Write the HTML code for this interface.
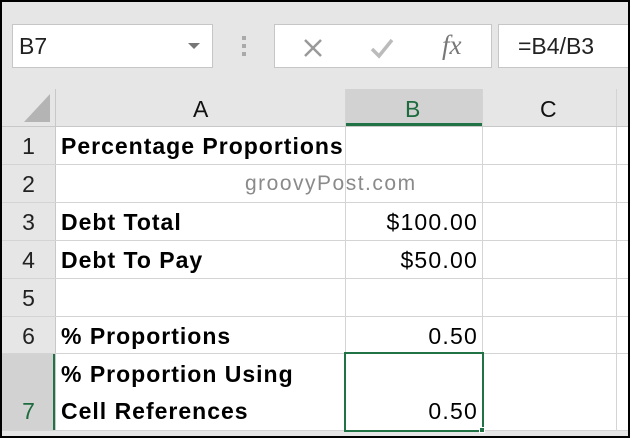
<!DOCTYPE html>
<html><head><style>
*{margin:0;padding:0;box-sizing:border-box}
body{width:630px;height:438px;overflow:hidden;background:#000;font-family:"Liberation Sans",sans-serif}
#w{position:absolute;left:2px;top:2px;width:626px;height:434px;background:#e6e6e6;overflow:hidden}
.abs{position:absolute}
.box{position:absolute;background:#fff;border:1px solid #c6c6c6}
.hl{position:absolute;background:#d4d4d4;height:1px}
.vl{position:absolute;background:#d4d4d4;width:1px}
.t{position:absolute;font-size:23px;font-weight:bold;color:#000;white-space:nowrap;letter-spacing:1px}
.n{position:absolute;font-size:23px;color:#000;white-space:nowrap;letter-spacing:1.2px}
.rh{position:absolute;left:0;width:53px;text-align:center;font-size:23px;color:#222}
</style></head><body>
<div id="w">
<div class="box" style="left:10px;top:22px;width:201px;height:44px"></div>
<div class="abs" style="left:17px;top:31px;font-size:23px;color:#222">B7</div>
<div class="abs" style="left:186px;top:41px;width:0;height:0;border-left:6px solid transparent;border-right:6px solid transparent;border-top:6px solid #777"></div>
<div class="abs" style="left:240px;top:34px;width:4px;height:4px;background:#aaa;box-shadow:0 8px 0 #aaa,0 16px 0 #aaa"></div>
<div class="box" style="left:272px;top:22px;width:218px;height:44px"></div>
<svg class="abs" style="left:300px;top:35px" width="22" height="22"><path d="M3 3L19 19M19 3L3 19" stroke="#999" stroke-width="2.5"/></svg>
<svg class="abs" style="left:367px;top:35px" width="26" height="22"><path d="M3 12L10 19L23 3" stroke="#bbb" stroke-width="3.5" fill="none"/></svg>
<div class="abs" style="left:440px;top:28px;font-family:'Liberation Serif',serif;font-style:italic;font-size:27px;color:#777">fx</div>
<div class="box" style="left:496px;top:22px;width:150px;height:44px"></div>
<div class="abs" style="left:516px;top:31px;font-size:23px;color:#222">=B4/B3</div>
<!-- grid -->
<div class="abs" style="left:0;top:87px;width:626px;height:341px;background:#fff"></div>
<div class="abs" style="left:0;top:87px;width:626px;height:37px;background:#e6e6e6"></div>
<div class="abs" style="left:0;top:124px;width:53px;height:304px;background:#e6e6e6"></div>
<div class="abs" style="left:343px;top:87px;width:137px;height:37px;background:#d2d2d2;border-bottom:3px solid #217346"></div>
<div class="abs" style="left:0;top:351px;width:53px;height:77px;background:#d2d2d2"></div>
<div class="abs" style="left:22px;top:92px;width:0;height:0;border-bottom:28px solid #b4b4b4;border-left:26px solid transparent"></div>
<div class="vl" style="left:53px;top:87px;height:341px;background:#c8c8c8"></div>
<div class="vl" style="left:343px;top:87px;height:341px"></div>
<div class="vl" style="left:480px;top:87px;height:341px"></div>
<div class="vl" style="left:614px;top:87px;height:341px"></div>
<div class="hl" style="left:0;top:124px;width:626px;background:#c8c8c8"></div>
<div class="hl" style="left:0;top:162px;width:626px"></div>
<div class="hl" style="left:0;top:200px;width:626px"></div>
<div class="hl" style="left:0;top:238px;width:626px"></div>
<div class="hl" style="left:0;top:276px;width:626px"></div>
<div class="hl" style="left:0;top:314px;width:626px"></div>
<div class="hl" style="left:0;top:351px;width:626px"></div>
<div class="hl" style="left:0;top:428px;width:626px"></div>
<div class="abs" style="left:51px;top:352px;width:2px;height:76px;background:#217346"></div>
<div class="abs" style="left:191px;top:94px;font-size:23px;color:#111">A</div>
<div class="abs" style="left:403px;top:94px;font-size:23px;color:#1d6b3f">B</div>
<div class="abs" style="left:538px;top:94px;font-size:23px;color:#111">C</div>
<div class="rh" style="top:131px">1</div>
<div class="rh" style="top:169px">2</div>
<div class="rh" style="top:207px">3</div>
<div class="rh" style="top:245px">4</div>
<div class="rh" style="top:283px">5</div>
<div class="rh" style="top:321px">6</div>
<div class="rh" style="top:396px;color:#1d6b3f">7</div>
<div class="t" style="left:59px;top:131px">Percentage Proportions</div>
<div class="abs" style="left:243px;top:170px;font-size:21px;letter-spacing:1.5px;color:#8a8a8a">groovyPost.com</div>
<div class="t" style="left:59px;top:207px">Debt Total</div>
<div class="n" style="right:150px;top:207px">$100.00</div>
<div class="t" style="left:59px;top:245px">Debt To Pay</div>
<div class="n" style="right:150px;top:245px">$50.00</div>
<div class="t" style="left:59px;top:321px">% Proportions</div>
<div class="n" style="right:150px;top:321px">0.50</div>
<div class="t" style="left:59px;top:359px">% Proportion Using</div>
<div class="t" style="left:59px;top:396px">Cell References</div>
<div class="n" style="right:150px;top:396px">0.50</div>
<div class="abs" style="left:342px;top:350px;width:140px;height:80px;border:2px solid #217346"></div>
<div class="abs" style="left:477px;top:425px;width:6px;height:6px;background:#217346;border:1px solid #fff"></div>
</div>
</body></html>
